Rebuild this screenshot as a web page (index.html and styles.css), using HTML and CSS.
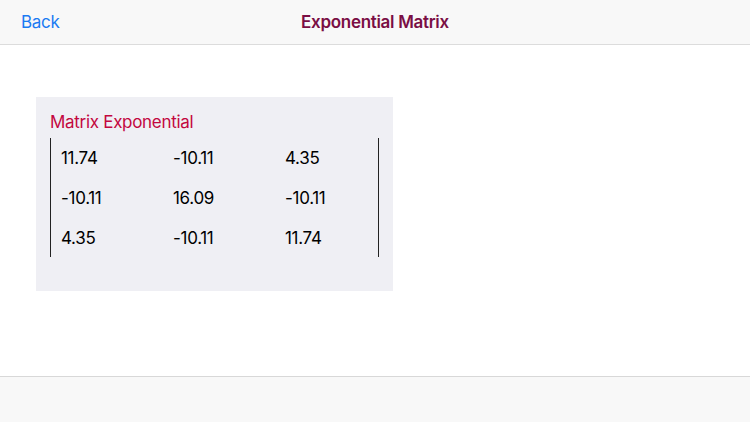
FILE: index.html
```html
<!DOCTYPE html>
<html>
<head>
<meta charset="utf-8">
<link rel="stylesheet" href="styles.css">
</head>
<body>
<div class="app">
  <header class="navbar">
    <a class="back">Back</a>
    <h1 class="title">Exponential Matrix</h1>
  </header>
  <main class="content">
    <section class="card">
      <h2 class="card-title">Matrix Exponential</h2>
      <div class="matrix">
        <div class="cell">11.74</div><div class="cell">-10.11</div><div class="cell">4.35</div>
        <div class="cell">-10.11</div><div class="cell">16.09</div><div class="cell">-10.11</div>
        <div class="cell">4.35</div><div class="cell">-10.11</div><div class="cell">11.74</div>
      </div>
    </section>
  </main>
  <footer class="toolbar"></footer>
</div>
</body>
</html>
```
FILE: styles.css
```css
* { box-sizing: border-box; margin: 0; padding: 0; }
html, body { width: 750px; height: 422px; overflow: hidden; }
body { font-family: "Inter", "Roboto", "Liberation Sans", sans-serif; background: #fff; color: #000; }
.app { display: flex; flex-direction: column; height: 422px; }
.navbar {
  height: 45px; flex: none; background: #f8f8f8; border-bottom: 1px solid #dcdcdc;
  display: flex; align-items: center; justify-content: center; position: relative;
}
.back {
  position: absolute; left: 21px; top: 12px; font-size: 17px; color: #1b7bf2; letter-spacing: -0.3px;
}
.title { font-size: 17px; font-weight: 600; color: #7a0e44; letter-spacing: -0.3px; }
.content { flex: 1; padding: 52px 0 0 36px; }
.card { width: 357px; height: 194px; background: #efeff4; padding: 15px 0 0 14px; }
.card-title { font-size: 17px; font-weight: 400; color: #c3073f; letter-spacing: -0.3px; line-height: 21px; }
.matrix {
  margin-top: 5px; width: 329px; height: 119px;
  border-left: 1.5px solid #222; border-right: 1.5px solid #222;
  display: grid; grid-template-columns: 112px 112px 1fr; grid-auto-rows: 40px;
  padding: 0 0 0 10px;
}
.cell { font-size: 17px; line-height: 20px; padding-top: 10px; letter-spacing: -0.3px; }
.toolbar { height: 46px; flex: none; background: #f8f8f8; border-top: 1px solid #d8d8d8; }
```
